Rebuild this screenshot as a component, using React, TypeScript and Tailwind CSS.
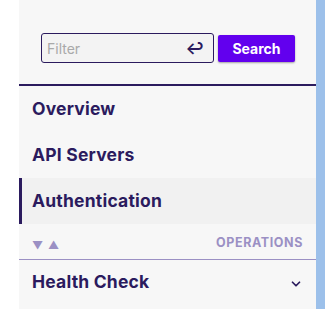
import { ChevronDown } from 'lucide-react';

const navItems = [
  { label: 'Overview', active: false },
  { label: 'API Servers', active: false },
  { label: 'Authentication', active: true },
];

export default function App() {
  return (
    <div className="flex w-[325px] h-[309px] bg-white overflow-hidden font-['Inter',sans-serif]">
      <div className="w-[19px] shrink-0 bg-white" />

      <div className="w-[297px] shrink-0 flex flex-col bg-[#f7f7f7]">
        {/* Search header */}
        <div className="flex items-center pl-[22px] pr-[21px] pt-[33px] pb-[21px] border-b-2 border-[#2b1b5e]">
          <div className="flex items-center w-[173px] h-[30px] rounded-[3px] border border-[#2b1b5e] bg-[#f3f3f3] px-[5px]">
            <span className="flex-1 text-[14px] text-[#a9a9a9]">Filter</span>
            <span className="text-[16px] leading-none font-bold text-[#2b1b5e] mr-[4px]">↩</span>
          </div>
          <button className="ml-[4px] w-[77px] h-[27px] rounded-[2px] bg-[#6200ee] text-white text-[14px] font-bold shadow-[0_1px_2px_rgba(0,0,0,0.35)]">
            Search
          </button>
        </div>

        {/* Nav */}
        {navItems.map((item) => (
          <div
            key={item.label}
            className={`flex items-center h-[46px] text-[17.5px] tracking-[0.2px] font-bold text-[#2b1b5e] ${
              item.active ? 'bg-[#f1f1f1] border-l-[3px] border-[#2b1b5e] pl-[10px]' : 'pl-[13px]'
            }`}
          >
            {item.label}
          </div>
        ))}

        {/* Operations header */}
        <div className="flex items-end justify-between h-[36px] pb-[6px] pl-[13px] pr-[13px] border-b border-[#9b90c4] text-[#9b90c4]">
          <span className="text-[11px] tracking-[5px]">▼▲</span>
          <span className="text-[12.5px] font-bold tracking-[0.6px]">OPERATIONS</span>
        </div>

        <div className="flex items-center justify-between h-[44px] pl-[13px] pr-[13px] text-[17.5px] tracking-[0.2px] font-bold text-[#2b1b5e]">
          <span>Health Check</span>
          <ChevronDown className="w-[14px] h-[14px] mt-[3px]" strokeWidth={3} />
        </div>
      </div>

      <div className="flex-1 bg-[#9cc0ea]" />
    </div>
  );
}
